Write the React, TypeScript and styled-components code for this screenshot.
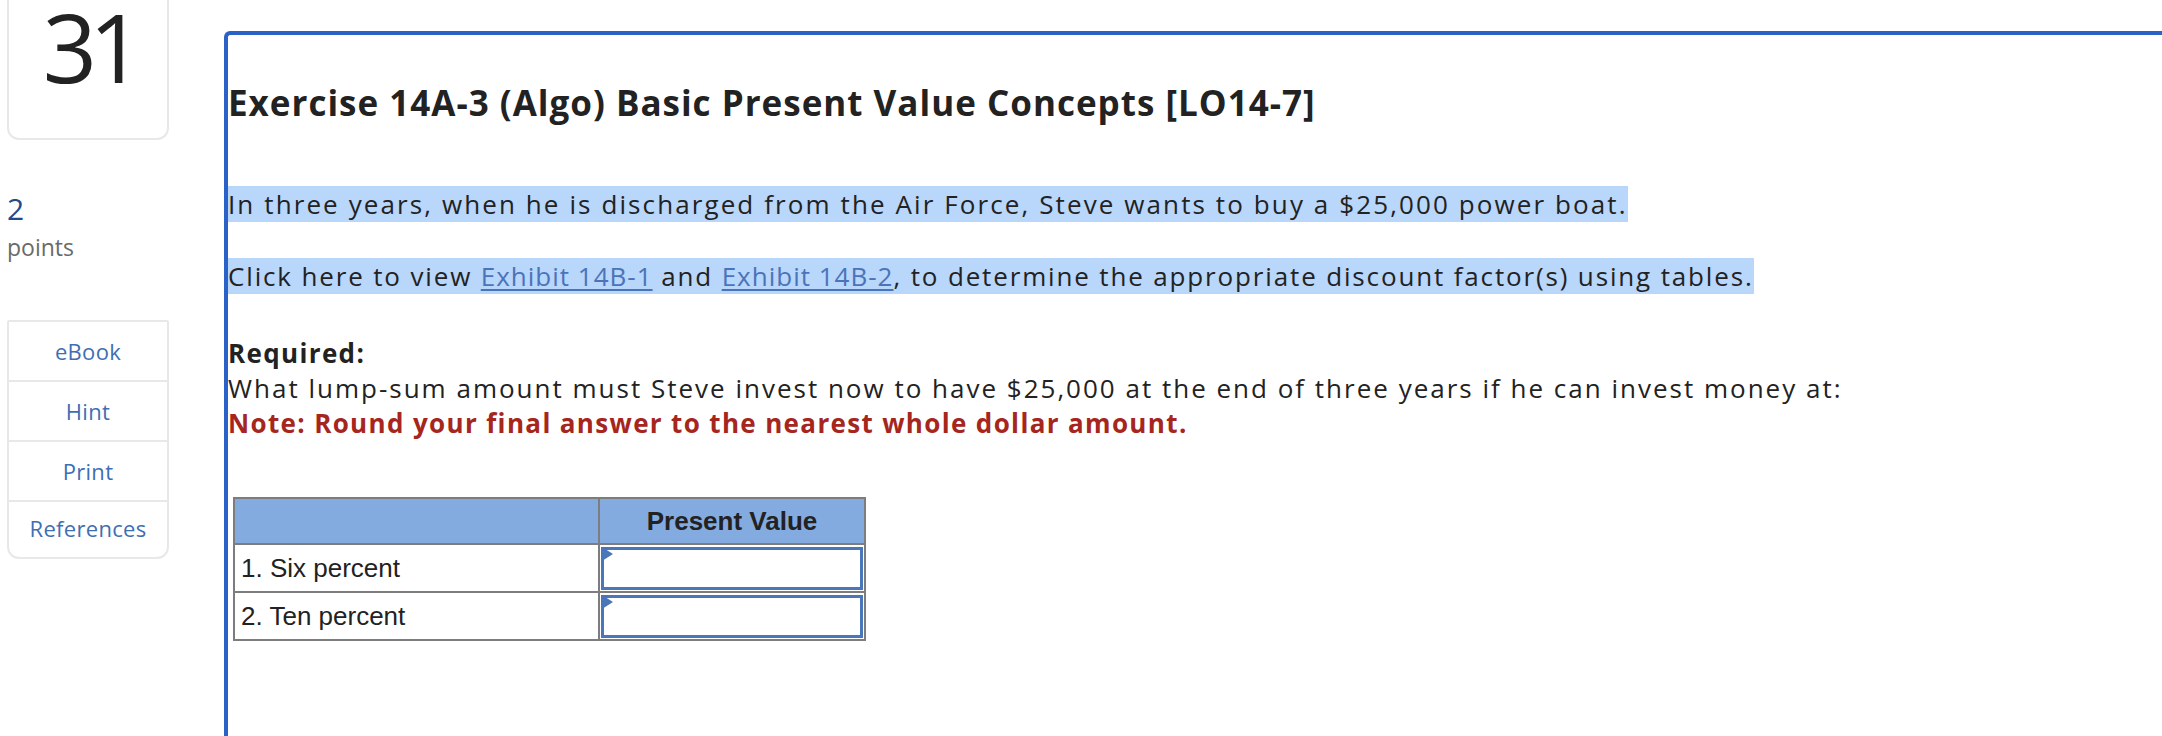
import styled, { createGlobalStyle } from "styled-components";

const GlobalStyle = createGlobalStyle`
  html, body {
    margin: 0;
    padding: 0;
    background: #ffffff;
    overflow: hidden;
  }
  body {
    font-family: "Open Sans", Lato, sans-serif;
    color: #222222;
  }
`;

const TOOLS = ["eBook", "Hint", "Print", "References"];

const ROWS = ["1. Six percent", "2. Ten percent"];

function App() {
  return (
    <>
      <GlobalStyle />
      <Page>
        <Sidebar>
          <NumberCard>31</NumberCard>
          <Points>
            <PointValue>2</PointValue>
            <PointLabel>points</PointLabel>
          </Points>
          <ToolList>
            {TOOLS.map((tool) => (
              <ToolButton key={tool} type="button">
                {tool}
              </ToolButton>
            ))}
          </ToolList>
        </Sidebar>

        <Panel>
          <Title>Exercise 14A-3 (Algo) Basic Present Value Concepts [LO14-7]</Title>

          <Para $spacing={2.1}>
            <Selected>
              In three years, when he is discharged from the Air Force, Steve wants to buy a $25,000
              power boat.{" "}
            </Selected>
          </Para>

          <Para $spacing={1.85}>
            <Selected>
              Click here to view <Link href="#">Exhibit 14B-1</Link> and{" "}
              <Link href="#">Exhibit 14B-2</Link>, to determine the appropriate discount factor(s)
              using tables.
            </Selected>
          </Para>

          <Required>
            <strong>Required:</strong>
            <br />
            What lump-sum amount must Steve invest now to have $25,000 at the end of three years if he
            can invest money at:
            <br />
            <Note>Note: Round your final answer to the nearest whole dollar amount.</Note>
          </Required>

          <AnswerTable>
            <thead>
              <tr>
                <HeadCell />
                <HeadCell>Present Value</HeadCell>
              </tr>
            </thead>
            <tbody>
              {ROWS.map((label) => (
                <tr key={label}>
                  <LabelCell>{label}</LabelCell>
                  <InputCell>
                    <AnswerInput type="text" />
                    <Marker />
                  </InputCell>
                </tr>
              ))}
            </tbody>
          </AnswerTable>
        </Panel>
      </Page>
    </>
  );
}

const Page = styled.div`
  display: flex;
  align-items: flex-start;
  width: 2162px;
  height: 736px;
  overflow: hidden;
`;

const Sidebar = styled.aside`
  width: 162px;
  margin-left: 7px;
  display: flex;
  flex-direction: column;
  flex-shrink: 0;
`;

/* the card's top edge is scrolled off screen, so only sides and bottom show */
const NumberCard = styled.div`
  box-sizing: border-box;
  height: 140px;
  padding-top: 8px;
  border: 2px solid #e8e8e8;
  border-top: none;
  border-radius: 0 0 12px 12px;
  display: flex;
  align-items: flex-start;
  justify-content: center;
  font-size: 95px;
  font-weight: 500;
  line-height: 76px;
  letter-spacing: -8px;
  text-indent: 2px;
  color: #222222;
`;

const Points = styled.div`
  display: flex;
  flex-direction: column;
  margin-top: 51px;
`;

const PointValue = styled.span`
  font-size: 30px;
  line-height: 36px;
  color: #224a8b;
`;

const PointLabel = styled.span`
  margin-top: 6px;
  font-size: 23px;
  line-height: 28px;
  color: #6a6a6a;
`;

const ToolList = styled.nav`
  margin-top: 59px;
  border: 2px solid #e8e8e8;
  border-radius: 2px 2px 12px 12px;
  display: flex;
  flex-direction: column;
`;

const ToolButton = styled.button`
  height: 60px;
  border: none;
  border-bottom: 2px solid #e8e8e8;
  background: transparent;
  font-family: "Open Sans", Lato, sans-serif;
  font-size: 22px;
  letter-spacing: 0.3px;
  color: #3e6eb4;
  cursor: pointer;
  padding: 0;

  &:last-child {
    border-bottom: none;
    height: 55px;
    padding-bottom: 3px;
  }
`;

const Panel = styled.main`
  flex: 1;
  margin-left: 55px;
  margin-top: 31px;
  height: 760px;
  border-top: 4px solid #2b62c8;
  border-left: 4px solid #2b62c8;
  border-top-left-radius: 6px;
  display: flex;
  flex-direction: column;
  align-items: flex-start;
`;

const Title = styled.h2`
  margin: 46px 0 0 0;
  font-size: 35px;
  line-height: 44px;
  font-weight: 700;
  letter-spacing: 1px;
  color: #222222;
`;

const Para = styled.p<{ $spacing: number }>`
  margin: 0;
  font-size: 26px;
  line-height: 35px;
  letter-spacing: ${(p) => p.$spacing}px;

  & + & {
    margin-top: 37px;
  }

  ${Title} + & {
    margin-top: 62px;
  }
`;

const Selected = styled.span`
  background: #b9d6fb;
`;

const Link = styled.a`
  color: #4a74b9;
  letter-spacing: 1px;
  text-decoration: underline;
  text-decoration-thickness: 2px;
  text-underline-offset: 3px;
`;

const Required = styled.div`
  margin-top: 42px;
  font-size: 26px;
  line-height: 35px;
  letter-spacing: 2px;

  strong {
    font-weight: 700;
    letter-spacing: 1.35px;
  }
`;

const Note = styled.strong`
  color: #a6261d;
`;

const AnswerTable = styled.table`
  margin: 56px 0 0 5px;
  border-collapse: collapse;
  border: 2px solid #7d7d7d;
  font-family: "Liberation Sans", Arial, sans-serif;
  font-size: 26px;
  letter-spacing: 0;
  color: #222222;
`;

const HeadCell = styled.th`
  height: 44px;
  padding: 0;
  background: #84abdf;
  border: 2px solid #7d7d7d;
  font-weight: 700;
  text-align: center;

  &:first-child {
    width: 363px;
  }

  &:last-child {
    width: 264px;
  }
`;

const LabelCell = styled.td`
  height: 44px;
  padding: 0 0 0 6px;
  border: 2px solid #7d7d7d;
  text-align: left;
`;

const InputCell = styled.td`
  position: relative;
  height: 44px;
  padding: 1px;
  border: 2px solid #7d7d7d;
`;

const AnswerInput = styled.input`
  display: block;
  box-sizing: border-box;
  width: 100%;
  height: 43px;
  margin: 0;
  border: 3px solid #4a76ba;
  outline: none;
  background: #ffffff;
`;

const Marker = styled.span`
  position: absolute;
  left: 2px;
  top: 2px;
  width: 0;
  height: 0;
  border-top: 7px solid transparent;
  border-bottom: 7px solid transparent;
  border-left: 11px solid #4a76ba;
`;

export default App;
